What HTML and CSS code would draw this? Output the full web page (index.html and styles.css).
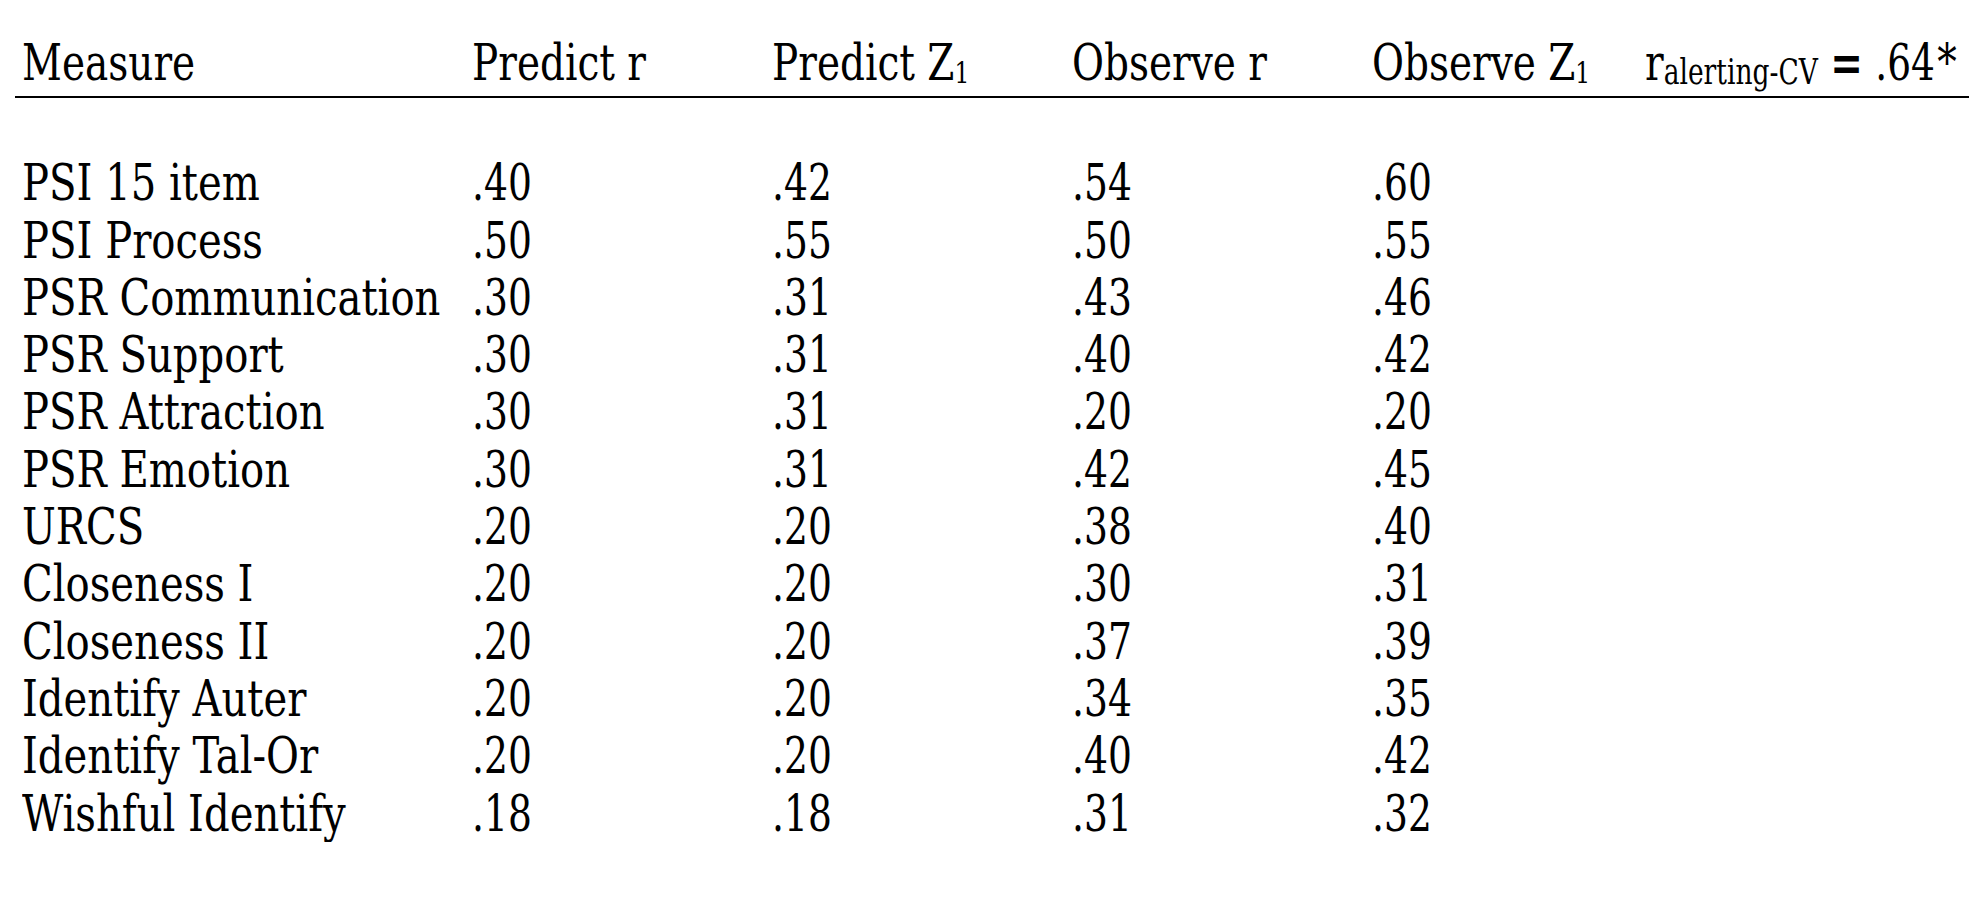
FILE: index.html
```html
<!DOCTYPE html>
<html lang="en">
<head>
    <meta charset="UTF-8">
    <title>Predicted and observed correlations</title>
    <link rel="stylesheet" href="styles.css">
</head>
<body>
    <div class="results">
        <div class="row head">
            <div class="cell">Measure</div>
            <div class="cell">Predict r</div>
            <div class="cell">Predict Z<sub>1</sub></div>
            <div class="cell">Observe r</div>
            <div class="cell">Observe Z<sub>1</sub></div>
            <div class="cell">r<sub class="alert">alerting-CV</sub> <span class="eq">=</span> <span class="num">.64</span>*</div>
        </div>
        <div class="body">
            <div class="row"><div class="cell label">PSI 15 item</div><div class="cell num">.40</div><div class="cell num">.42</div><div class="cell num">.54</div><div class="cell num">.60</div></div>
            <div class="row"><div class="cell label">PSI Process</div><div class="cell num">.50</div><div class="cell num">.55</div><div class="cell num">.50</div><div class="cell num">.55</div></div>
            <div class="row"><div class="cell label">PSR Communication</div><div class="cell num">.30</div><div class="cell num">.31</div><div class="cell num">.43</div><div class="cell num">.46</div></div>
            <div class="row"><div class="cell label">PSR Support</div><div class="cell num">.30</div><div class="cell num">.31</div><div class="cell num">.40</div><div class="cell num">.42</div></div>
            <div class="row"><div class="cell label">PSR Attraction</div><div class="cell num">.30</div><div class="cell num">.31</div><div class="cell num">.20</div><div class="cell num">.20</div></div>
            <div class="row"><div class="cell label">PSR Emotion</div><div class="cell num">.30</div><div class="cell num">.31</div><div class="cell num">.42</div><div class="cell num">.45</div></div>
            <div class="row"><div class="cell label">URCS</div><div class="cell num">.20</div><div class="cell num">.20</div><div class="cell num">.38</div><div class="cell num">.40</div></div>
            <div class="row"><div class="cell label">Closeness I</div><div class="cell num">.20</div><div class="cell num">.20</div><div class="cell num">.30</div><div class="cell num">.31</div></div>
            <div class="row"><div class="cell label">Closeness II</div><div class="cell num">.20</div><div class="cell num">.20</div><div class="cell num">.37</div><div class="cell num">.39</div></div>
            <div class="row"><div class="cell label">Identify Auter</div><div class="cell num">.20</div><div class="cell num">.20</div><div class="cell num">.34</div><div class="cell num">.35</div></div>
            <div class="row"><div class="cell label">Identify Tal-Or</div><div class="cell num">.20</div><div class="cell num">.20</div><div class="cell num">.40</div><div class="cell num">.42</div></div>
            <div class="row"><div class="cell label">Wishful Identify</div><div class="cell num">.18</div><div class="cell num">.18</div><div class="cell num">.31</div><div class="cell num">.32</div></div>
        </div>
    </div>
</body>
</html>
```

FILE: styles.css
```css
* {
    box-sizing: border-box;
    margin: 0;
    padding: 0;
}

body {
    background-color: #ffffff;
    color: #000000;
    font-family: "DejaVu Serif Condensed", "DejaVu Serif", serif;
    font-stretch: condensed;
    font-size: 51px;
    line-height: 57.3px;
}

.results {
    padding-top: 34px;
    padding-left: 15px;
}

.row {
    display: grid;
    grid-template-columns: 450px 300px 300px 300px 273px 1fr;
    padding-left: 7px;
    white-space: nowrap;
}

/* the source face is narrower than DejaVu, so squeeze the glyphs */
.cell {
    transform: scaleX(0.85);
    transform-origin: left center;
}

.cell.label {
    transform: scaleX(0.875);
}

.cell.num {
    transform: scaleX(0.82);
}

.head {
    padding-bottom: 5px;
    border-bottom: 2px solid #000000;
}

.body {
    padding-top: 56px;
}

sub {
    font-size: 0.6em;
    line-height: 0;
    vertical-align: -0.1em;
}

sub.alert {
    font-size: 0.68em;
    vertical-align: -0.12em;
}

.eq {
    font-weight: bold;
}

.head .num {
    display: inline-block;
    transform: scaleX(0.96);
    transform-origin: left center;
}
```
